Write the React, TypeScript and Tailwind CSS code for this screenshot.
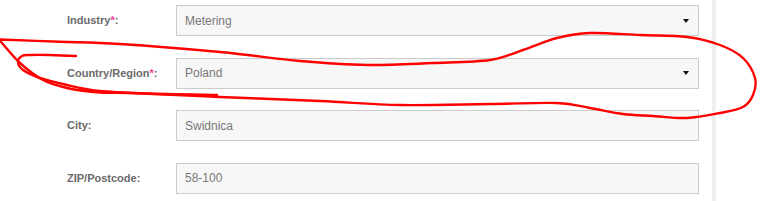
import React from "react";

type P = [number, number];

function smooth(points: P[]): string {
  let d = `M${points[0][0]},${points[0][1]}`;
  for (let i = 0; i < points.length - 1; i++) {
    const p0 = points[i - 1] || points[i];
    const p1 = points[i];
    const p2 = points[i + 1];
    const p3 = points[i + 2] || p2;
    const c1: P = [p1[0] + (p2[0] - p0[0]) / 6, p1[1] + (p2[1] - p0[1]) / 6];
    const c2: P = [p2[0] - (p3[0] - p1[0]) / 6, p2[1] - (p3[1] - p1[1]) / 6];
    d += ` C${c1[0].toFixed(1)},${c1[1].toFixed(1)} ${c2[0].toFixed(1)},${c2[1].toFixed(1)} ${p2[0]},${p2[1]}`;
  }
  return d;
}

const loop: P[] = [
  [-2, 39.5], [60, 41.8], [120, 44], [220, 52], [300, 61], [367, 65], [433, 63], [490, 60],
  [523, 50], [557, 38], [590, 33], [640, 35], [687, 37], [720, 45], [743, 58], [755, 78],
  [753, 95], [743, 107], [720, 113], [687, 118], [653, 116], [623, 114], [590, 108], [557, 103],
  [490, 104], [400, 105], [320, 101], [220, 97], [130, 93], [100, 92.5], [67, 88], [43, 80],
  [20, 63], [2, 43], [-2, 39],
];

const hook: P[] = [
  [76, 56], [50, 55], [30, 55], [22, 56], [18, 62], [23, 70], [40, 78], [67, 85], [100, 91],
  [150, 93.5], [217, 95],
];

function Row({ label, required, value, select }: { label: string; required?: boolean; value: string; select?: boolean }) {
  return (
    <div className="flex items-center h-[31px]">
      <div className="w-[109px] text-[11px] font-bold text-[#6a6a6a]">
        {label}
        {required && <span className="text-[#ec3d97]">*</span>}:
      </div>
      <div className="flex-1 h-[31px] border border-[#cccccc] bg-[#f7f7f7] pl-[8px] pr-[8px] flex items-center justify-between text-[12px] text-[#777777]">
        <span>{value}</span>
        {select && (
          <span className="w-0 h-0 border-l-[3px] border-r-[3px] border-t-[4px] border-l-transparent border-r-transparent border-t-[#111111] mr-[1px]" />
        )}
      </div>
    </div>
  );
}

export default function App() {
  return (
    <div className="relative w-[771px] h-[201px] bg-white overflow-hidden flex font-['Liberation_Sans',Arial,sans-serif]">
      <div className="w-[712px] pl-[67px] pr-[13px] pt-[5px] flex flex-col gap-[21.5px]">
        <Row label="Industry" required value="Metering" select />
        <Row label="Country/Region" required value="Poland" select />
        <Row label="City" value="Swidnica" />
        <Row label="ZIP/Postcode" value="58-100" />
      </div>
      <div className="w-[4px] h-full bg-[#efefef]" />
      <div className="flex-1" />
      <svg className="absolute left-0 top-0 pointer-events-none" width={771} height={201} viewBox="0 0 771 201">
        <path d={smooth(loop)} fill="none" stroke="#ff0000" strokeWidth={2.4} strokeLinecap="round" strokeLinejoin="round" />
        <path d={smooth(hook)} fill="none" stroke="#ff0000" strokeWidth={2.4} strokeLinecap="round" strokeLinejoin="round" />
      </svg>
    </div>
  );
}
